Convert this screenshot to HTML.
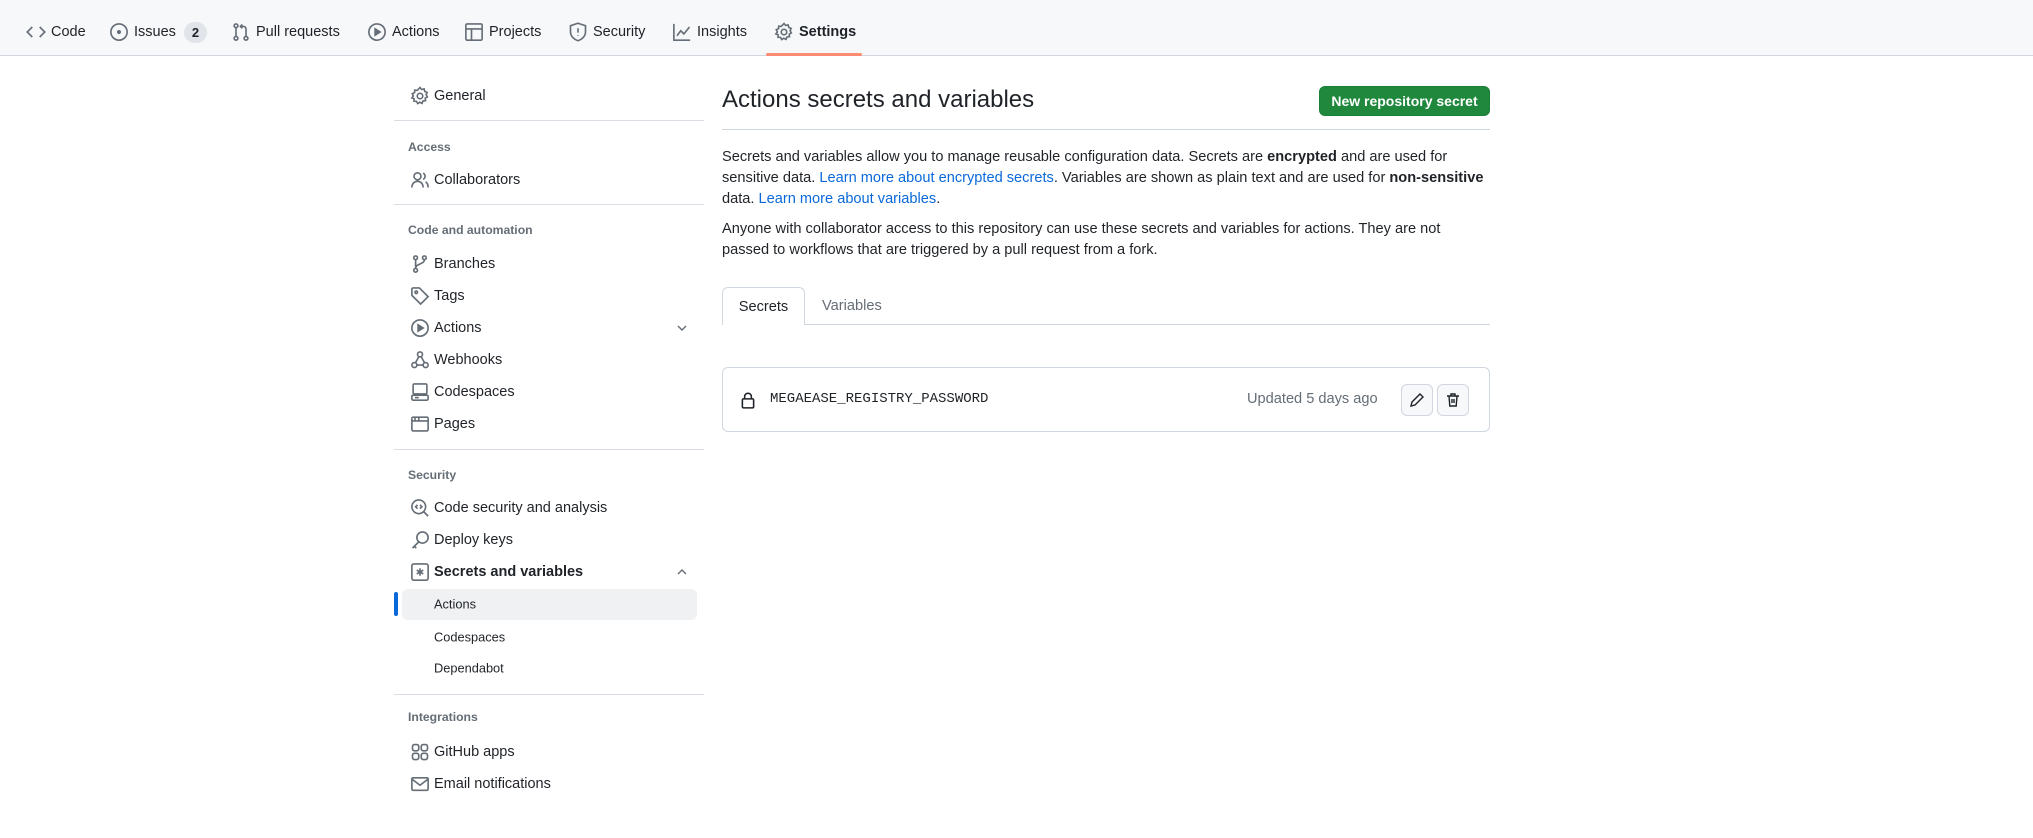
<!DOCTYPE html>
<html><head><meta charset="utf-8"><style>
*{box-sizing:border-box;margin:0;padding:0}
body{width:2033px;height:838px;background:#fff;font-family:"Liberation Sans",sans-serif;color:#1f2328;position:relative;overflow:hidden;font-size:15px}
.nav{position:absolute;left:0;top:0;width:2033px;height:56px;background:#f6f8fa;border-bottom:1px solid #d0d7de}
.ni{position:absolute;top:12px;height:40px;display:flex;align-items:center;font-size:14.5px;color:#1f2328;white-space:nowrap}
.ni svg{width:20px;height:20px;margin-right:5px;fill:none;stroke:#656d76;stroke-width:1.3}
.badge{display:inline-block;background:#e1e4e8;border-radius:12px;font-size:13px;padding:3px 8px;margin-left:8px;font-weight:bold}
.ul{position:absolute;left:766px;top:53px;width:96px;height:3px;background:#fd8c73;border-radius:2px}
.si{position:absolute;left:410px;display:flex;align-items:center;font-size:14.5px;white-space:nowrap;transform:translateY(-50%)}
.si svg{width:20px;height:20px;margin-right:4px;fill:none;stroke:#656d76;stroke-width:1.3}
.sh{position:absolute;left:408px;font-size:12.2px;font-weight:bold;color:#656d76;transform:translateY(-50%)}
.sub{position:absolute;left:434px;font-size:12.8px;transform:translateY(-50%)}
.hr{position:absolute;left:394px;width:310px;height:1px;background:#d8dee4}
.chev{position:absolute;left:676px;width:12px;height:12px}
a{color:#0969da;text-decoration:none}
p{position:absolute;left:722px;width:768px;font-size:14.6px;line-height:20.8px}
</style></head><body>
<div class="nav">
<div class="ni" style="left:26px"><svg viewBox="0 0 16 16"><path d="M5 4L1 8l4 4M11 4l4 4-4 4"/></svg>Code</div>
<div class="ni" style="left:109px"><svg viewBox="0 0 16 16"><circle cx="8" cy="8" r="6.5"/><circle cx="8" cy="8" r="1" fill="#656d76"/></svg>Issues<span class="badge">2</span></div>
<div class="ni" style="left:231px"><svg viewBox="0 0 16 16"><circle cx="4" cy="3" r="1.5"/><circle cx="4" cy="13" r="1.5"/><circle cx="12" cy="13" r="1.5"/><path d="M4 4.5v7M12 11.5V5.5a2 2 0 00-2-2H7.5M9 2L7.5 3.5 9 5"/></svg>Pull requests</div>
<div class="ni" style="left:367px"><svg viewBox="0 0 16 16"><circle cx="8" cy="8" r="6.5"/><path d="M6.5 5.5v5l4-2.5z" fill="#656d76"/></svg>Actions</div>
<div class="ni" style="left:464px"><svg viewBox="0 0 16 16"><rect x="1.5" y="1.5" width="13" height="13" rx="1"/><path d="M1.5 5.5h13M6 5.5v9"/></svg>Projects</div>
<div class="ni" style="left:568px"><svg viewBox="0 0 16 16"><path d="M8 1l6 2v5c0 3.5-3 6-6 7-3-1-6-3.5-6-7V3z"/><path d="M8 5v3.5M8 10.5v.5"/></svg>Security</div>
<div class="ni" style="left:672px"><svg viewBox="0 0 16 16"><path d="M1.5 1.5v13h13M4 11l3-4 2.5 2.5L14 4"/></svg>Insights</div>
<div class="ni" style="left:774px;font-weight:bold"><svg viewBox="0 0 16 16"><circle cx="8" cy="8" r="2.2"/><path d="M8 1.2l1.3 1.6 2-.5.5 2 1.9.8-.8 1.9 1 1.7-1.7 1 .2 2-2 .3-.8 1.9-1.8-.9-1.6 1.1-1-1.8-2-.1.1-2L1.5 9.6l1.2-1.7-.9-1.8 1.9-.8.1-2 2 .2z"/></svg>Settings</div>
<div class="ul"></div>
</div>

<div class="si" style="top:96px"><svg viewBox="0 0 16 16"><circle cx="8" cy="8" r="2.2"/><path d="M8 1.2l1.3 1.6 2-.5.5 2 1.9.8-.8 1.9 1 1.7-1.7 1 .2 2-2 .3-.8 1.9-1.8-.9-1.6 1.1-1-1.8-2-.1.1-2L1.5 9.6l1.2-1.7-.9-1.8 1.9-.8.1-2 2 .2z"/></svg>General</div>
<div class="hr" style="top:120px"></div>
<div class="sh" style="top:147px">Access</div>
<div class="si" style="top:180px"><svg viewBox="0 0 16 16"><circle cx="6" cy="5" r="2.8"/><path d="M1.5 14c0-3 2-5 4.5-5s4.5 2 4.5 5M10.5 2.5a2.8 2.8 0 010 5M12.5 9.5c1.3.8 2 2.5 2 4.5"/></svg>Collaborators</div>
<div class="hr" style="top:204px"></div>
<div class="sh" style="top:230px">Code and automation</div>
<div class="si" style="top:264px"><svg viewBox="0 0 16 16"><circle cx="4.5" cy="3" r="1.5"/><circle cx="11.5" cy="3" r="1.5"/><circle cx="4.5" cy="13" r="1.5"/><path d="M4.5 4.5v7M11.5 4.5c0 4-7 3-7 7"/></svg>Branches</div>
<div class="si" style="top:296px"><svg viewBox="0 0 16 16"><path d="M1.5 2.5v5l7 7 6-6-7-7h-5a1 1 0 00-1 1z"/><circle cx="5" cy="5" r="1"/></svg>Tags</div>
<div class="si" style="top:328px"><svg viewBox="0 0 16 16"><circle cx="8" cy="8" r="6.5"/><path d="M6.5 5.5v5l4-2.5z" fill="#656d76"/></svg>Actions</div>
<svg class="chev" style="top:322px" viewBox="0 0 12 12" fill="none" stroke="#656d76" stroke-width="1.4"><path d="M2 4l4 4 4-4"/></svg>
<div class="si" style="top:360px"><svg viewBox="0 0 16 16"><circle cx="8" cy="3.5" r="2"/><circle cx="3.5" cy="12" r="2"/><circle cx="12.5" cy="12" r="2"/><path d="M7 5.5L4.5 10M5.5 12h5M9 5.5l2.5 4.5"/></svg>Webhooks</div>
<div class="si" style="top:392px"><svg viewBox="0 0 16 16"><rect x="2.5" y="1.5" width="11" height="8" rx="1"/><rect x="1.5" y="10.5" width="13" height="4" rx="1"/><path d="M4 12.5h3"/></svg>Codespaces</div>
<div class="si" style="top:424px"><svg viewBox="0 0 16 16"><rect x="1.5" y="2.5" width="13" height="11" rx="1"/><path d="M1.5 5.5h13M4 2.5v3M7 2.5v3"/></svg>Pages</div>
<div class="hr" style="top:449px"></div>
<div class="sh" style="top:475px">Security</div>
<div class="si" style="top:508px"><svg viewBox="0 0 16 16"><circle cx="7" cy="7" r="5.5"/><path d="M11 11l3.5 3.5M6 5.5L4.5 7 6 8.5M8 5.5L9.5 7 8 8.5"/></svg>Code security and analysis</div>
<div class="si" style="top:540px"><svg viewBox="0 0 16 16"><circle cx="10" cy="6" r="4.5"/><path d="M7 9.5l-5 5M3.5 13l1.5 1.5M11 5h.1"/></svg>Deploy keys</div>
<div class="si" style="top:572px;font-weight:bold"><svg viewBox="0 0 16 16"><rect x="1.5" y="1.5" width="13" height="13" rx="1.5"/><path d="M8 5v6M5.4 6.5l5.2 3M10.6 6.5l-5.2 3"/></svg>Secrets and variables</div>
<svg class="chev" style="top:566px" viewBox="0 0 12 12" fill="none" stroke="#656d76" stroke-width="1.4"><path d="M2 8l4-4 4 4"/></svg>
<div style="position:absolute;left:402px;top:589px;width:295px;height:31px;background:#eff1f3;border-radius:6px"></div>
<div style="position:absolute;left:394px;top:592px;width:4px;height:24px;background:#0969da;border-radius:3px"></div>
<div class="sub" style="top:604px">Actions</div>
<div class="sub" style="top:637px">Codespaces</div>
<div class="sub" style="top:668px">Dependabot</div>
<div class="hr" style="top:694px"></div>
<div class="sh" style="top:717px">Integrations</div>
<div class="si" style="top:752px"><svg viewBox="0 0 16 16"><rect x="2" y="2" width="5" height="5" rx="1.5"/><rect x="9" y="2" width="5" height="5" rx="1.5"/><rect x="2" y="9" width="5" height="5" rx="1.5"/><rect x="9" y="9" width="5" height="5" rx="1.5"/></svg>GitHub apps</div>
<div class="si" style="top:784px"><svg viewBox="0 0 16 16"><rect x="1.5" y="3" width="13" height="10" rx="1"/><path d="M1.5 4l6.5 5 6.5-5"/></svg>Email notifications</div>

<div style="position:absolute;left:722px;top:85px;font-size:24px;line-height:30px">Actions secrets and variables</div>
<div style="position:absolute;left:1319px;top:86px;width:171px;height:30px;background:#1f883d;border:1px solid #1a7f37;border-radius:6px;color:#fff;font-weight:bold;font-size:14px;display:flex;align-items:center;justify-content:center">New repository secret</div>
<div style="position:absolute;left:722px;top:129px;width:768px;height:1px;background:#d0d7de"></div>
<p style="top:147px">Secrets and variables allow you to manage reusable configuration data. Secrets are <b>encrypted</b> and are used for sensitive data. <a>Learn more about encrypted secrets</a>. Variables are shown as plain text and are used for <b>non-sensitive</b> data. <a>Learn more about variables</a>.</p>
<p style="top:219px">Anyone with collaborator access to this repository can use these secrets and variables for actions. They are not<br>passed to workflows that are triggered by a pull request from a fork.</p>
<div style="position:absolute;left:722px;top:324px;width:768px;height:1px;background:#d0d7de"></div>
<div style="position:absolute;left:722px;top:287px;width:83px;height:38px;background:#fff;border:1px solid #d0d7de;border-bottom:none;border-radius:6px 6px 0 0;font-size:14.6px;display:flex;align-items:center;justify-content:center">Secrets</div>
<div style="position:absolute;left:822px;top:298px;font-size:14.6px;color:#656d76">Variables</div>
<div style="position:absolute;left:722px;top:367px;width:768px;height:65px;border:1px solid #d0d7de;border-radius:6px"></div>
<svg style="position:absolute;left:739px;top:390px" width="18" height="20" viewBox="0 0 16 16" fill="none" stroke="#1f2328" stroke-width="1.4"><rect x="3" y="7" width="10" height="8" rx="1"/><path d="M5 7V5a3 3 0 016 0v2"/></svg>
<div style="position:absolute;left:770px;top:391px;font-family:'Liberation Mono',monospace;font-size:14px">MEGAEASE_REGISTRY_PASSWORD</div>
<div style="position:absolute;left:1247px;top:391px;font-size:14.6px;color:#656d76">Updated 5 days ago</div>
<div style="position:absolute;left:1401px;top:384px;width:32px;height:32px;border:1px solid #d0d7de;border-radius:6px;background:#f6f8fa"><svg style="margin:7px" width="16" height="16" viewBox="0 0 16 16" fill="none" stroke="#1f2328" stroke-width="1.4"><path d="M11 2l3 3-8 8-4 1 1-4z"/></svg></div>
<div style="position:absolute;left:1437px;top:384px;width:32px;height:32px;border:1px solid #d0d7de;border-radius:6px;background:#f6f8fa"><svg style="margin:7px" width="16" height="16" viewBox="0 0 16 16" fill="none" stroke="#1f2328" stroke-width="1.4"><path d="M2 4h12M6 4V2h4v2M4 4l.8 10h6.4L12 4M7 7v4M9 7v4"/></svg></div>
</body></html>
